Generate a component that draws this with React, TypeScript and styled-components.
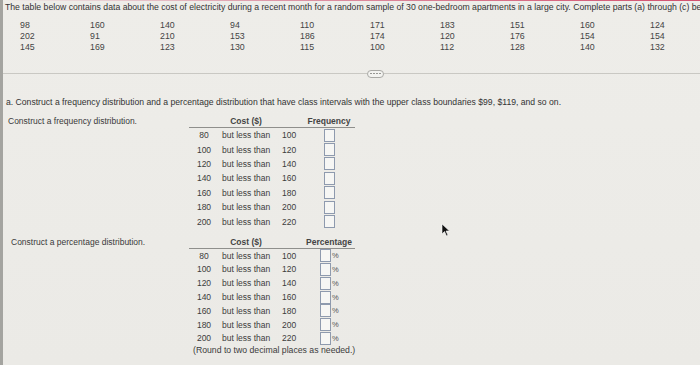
import React from 'react'
import styled, { createGlobalStyle } from 'styled-components'

const data = [
  [98, 160, 140, 94, 110, 171, 183, 151, 160, 124],
  [202, 91, 210, 153, 186, 174, 120, 176, 154, 154],
  [145, 169, 123, 130, 115, 100, 112, 128, 140, 132],
]

const classes = [80, 100, 120, 140, 160, 180, 200]

const GlobalStyle = createGlobalStyle`
  html, body {
    margin: 0;
    padding: 0;
    background: #ecebe7;
  }
  body {
    font-family: 'Liberation Sans', Arial, sans-serif;
    color: #3b3b3b;
  }
`

const App: React.FC = () => {
  return (
    <Page>
      <GlobalStyle />
      <TopStrip />
      <Title>
        The table below contains data about the cost of electricity during a recent month for a random sample of 30
        one-bedroom apartments in a large city. Complete parts (a) through (c) below.
      </Title>
      <DataGrid>
        {data.map((row, r) =>
          row.map((v, c) => <DataCell key={r + '-' + c}>{v}</DataCell>)
        )}
      </DataGrid>
      <Separator>
        <SepLine />
        <Pill>
          <PillDot />
          <PillDot />
          <PillDot />
          <PillDot />
        </Pill>
        <SepLine $fixed />
      </Separator>
      <Question>
        a. Construct a frequency distribution and a percentage distribution that have class intervals with the upper
        class boundaries $99, $119, and so on.
      </Question>

      <Section>
        <Label $indent={8}>Construct a frequency distribution.</Label>
        <Table>
          <Header>
            <HeadCell>Cost ($)</HeadCell>
            <HeadCell>Frequency</HeadCell>
          </Header>
          {classes.map((lo) => (
            <Row key={lo} $h={14.4}>
              <Lower>{lo}</Lower>
              <Words>but less than</Words>
              <Upper>{lo + 20}</Upper>
              <Box $shift={7} />
            </Row>
          ))}
        </Table>
      </Section>

      <Section>
        <Label $indent={11}>Construct a percentage distribution.</Label>
        <Table>
          <Header>
            <HeadCell>Cost ($)</HeadCell>
            <HeadCell>Percentage</HeadCell>
          </Header>
          {classes.map((lo) => (
            <Row key={lo} $h={13.8}>
              <Lower>{lo}</Lower>
              <Words>but less than</Words>
              <Upper>{lo + 20}</Upper>
              <Box $shift={3} />
              <Pct>%</Pct>
            </Row>
          ))}
          <Note>(Round to two decimal places as needed.)</Note>
        </Table>
      </Section>

      <Cursor width="10" height="14" viewBox="0 0 10 14">
        <path d="M1 1 L1 11 L3.5 8.5 L5.5 13 L7 12.3 L5 8 L8.5 8 Z" fill="#111" stroke="#fff" strokeWidth="0.6" />
      </Cursor>
    </Page>
  )
}

const Page = styled.div`
  position: relative;
  width: 700px;
  height: 365px;
  overflow: hidden;
  box-sizing: border-box;
  border-left: 3px solid #a4a4a0;
  background: linear-gradient(180deg, #eeede9 0%, #ebeae6 100%);
`

const TopStrip = styled.div`
  height: 1px;
  background: linear-gradient(90deg, rgba(210, 90, 120, 0) 0%, rgba(210, 90, 120, 0.6) 40%, #d2506e 100%);
`

const Title = styled.div`
  font-size: 8.68px;
  line-height: 12px;
  padding-left: 2px;
  white-space: nowrap;
  color: #333;
`

const DataGrid = styled.div`
  display: grid;
  grid-template-columns: repeat(10, 70px);
  grid-auto-rows: 11px;
  margin-top: 7px;
  padding-left: 17px;
`

const DataCell = styled.div`
  font-size: 8.8px;
  line-height: 11px;
  color: #444;
`

const Separator = styled.div`
  display: flex;
  align-items: center;
  margin-top: 17px;
  height: 7px;
`

const SepLine = styled.div<{ $fixed?: boolean }>`
  height: 1px;
  background: #c9c8c3;
  flex: ${(p) => (p.$fixed ? '0 0 316px' : '1')};
`

const Pill = styled.div`
  display: flex;
  align-items: center;
  justify-content: center;
  gap: 1.5px;
  width: 15px;
  height: 6px;
  border: 1px solid #a9a9a5;
  border-radius: 4px;
  background: #f3f3f0;
`

const PillDot = styled.span`
  width: 1.5px;
  height: 1.5px;
  border-radius: 50%;
  background: #8a8a86;
`

const Question = styled.div`
  margin-top: 19px;
  padding-left: 3px;
  font-size: 8.65px;
  line-height: 12px;
  color: #333;
  white-space: nowrap;
`

const Section = styled.div`
  display: flex;
  align-items: flex-start;
  margin-top: 8px;
`

const Label = styled.div<{ $indent: number }>`
  width: ${(p) => 189 - p.$indent}px;
  padding-left: ${(p) => p.$indent - 3}px;
  font-size: 8.5px;
  line-height: 11px;
  color: #3a3a3a;
`

const Table = styled.div`
  display: flex;
  flex-direction: column;
  width: 166px;
  font-size: 8.5px;
  color: #3c3c3c;
`

const Header = styled.div`
  display: grid;
  grid-template-columns: 114px 52px;
  border-bottom: 1px solid #8f8f8c;
  line-height: 11px;
`

const HeadCell = styled.div`
  text-align: center;
  font-weight: bold;
  color: #444;
`

const Row = styled.div<{ $h: number }>`
  display: flex;
  align-items: center;
  height: ${(p) => p.$h}px;
`

const Lower = styled.div`
  width: 30px;
  text-align: center;
`

const Words = styled.div`
  width: 58px;
  padding-left: 3px;
  box-sizing: border-box;
`

const Upper = styled.div`
  width: 40px;
  padding-left: 5px;
  box-sizing: border-box;
`

const Box = styled.div<{ $shift: number }>`
  margin-left: ${(p) => p.$shift}px;
  width: 9px;
  height: 11px;
  border: 1px solid #8e9aae;
  background: #f6f6f4;
`

const Pct = styled.span`
  font-size: 7.5px;
  margin-left: 1px;
  color: #555;
`

const Note = styled.div`
  margin-top: 0;
  margin-left: 4px;
  font-size: 8.7px;
  line-height: 10px;
  white-space: nowrap;
`

const Cursor = styled.svg`
  position: absolute;
  left: 438px;
  top: 223px;
`

export default App
